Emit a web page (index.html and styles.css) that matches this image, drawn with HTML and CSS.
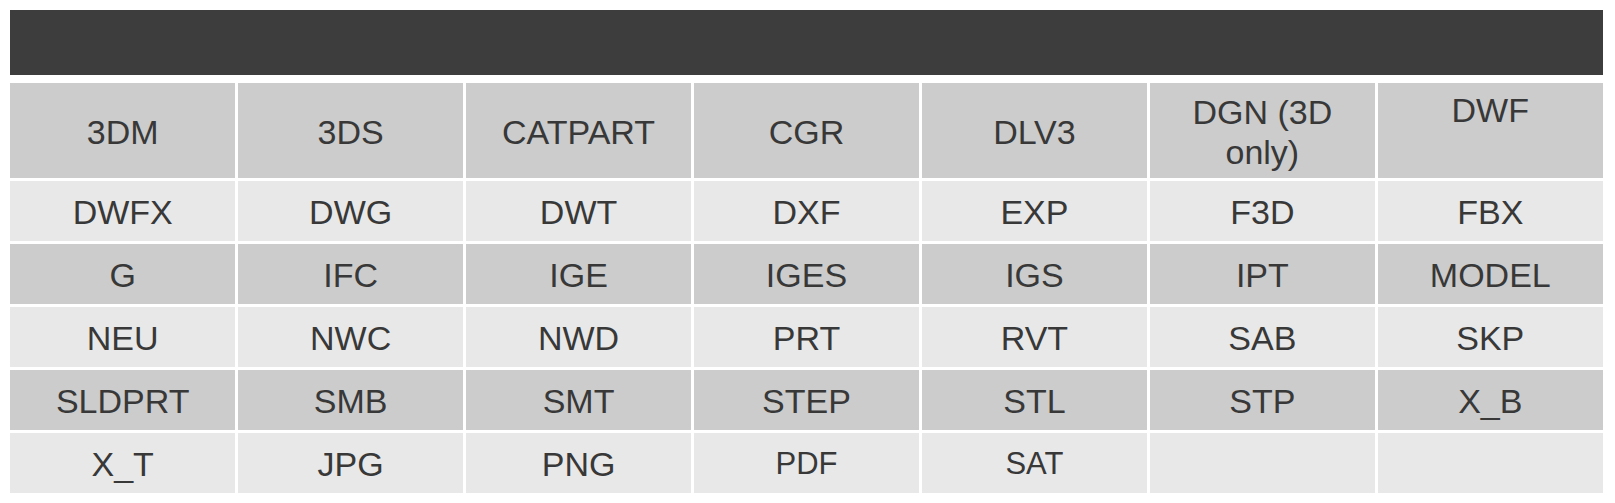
FILE: index.html
```html
<!DOCTYPE html>
<html>
<head>
<meta charset="utf-8">
<link rel="stylesheet" href="styles.css">
</head>
<body>
<div class="page">
  <div class="banner"></div>
  <div class="grid">
    <div class="cell dark tall">3DM</div>
    <div class="cell dark tall">3DS</div>
    <div class="cell dark tall">CATPART</div>
    <div class="cell dark tall">CGR</div>
    <div class="cell dark tall">DLV3</div>
    <div class="cell dark tall">DGN (3D<br>only)</div>
    <div class="cell dark tall top">DWF</div>

    <div class="cell light">DWFX</div>
    <div class="cell light">DWG</div>
    <div class="cell light">DWT</div>
    <div class="cell light">DXF</div>
    <div class="cell light">EXP</div>
    <div class="cell light">F3D</div>
    <div class="cell light">FBX</div>

    <div class="cell dark">G</div>
    <div class="cell dark">IFC</div>
    <div class="cell dark">IGE</div>
    <div class="cell dark">IGES</div>
    <div class="cell dark">IGS</div>
    <div class="cell dark">IPT</div>
    <div class="cell dark">MODEL</div>

    <div class="cell light">NEU</div>
    <div class="cell light">NWC</div>
    <div class="cell light">NWD</div>
    <div class="cell light">PRT</div>
    <div class="cell light">RVT</div>
    <div class="cell light">SAB</div>
    <div class="cell light">SKP</div>

    <div class="cell dark">SLDPRT</div>
    <div class="cell dark">SMB</div>
    <div class="cell dark">SMT</div>
    <div class="cell dark">STEP</div>
    <div class="cell dark">STL</div>
    <div class="cell dark">STP</div>
    <div class="cell dark">X_B</div>

    <div class="cell light">X_T</div>
    <div class="cell light">JPG</div>
    <div class="cell light">PNG</div>
    <div class="cell light small">PDF</div>
    <div class="cell light small">SAT</div>
    <div class="cell light"></div>
    <div class="cell light"></div>
  </div>
</div>
</body>
</html>
```

FILE: styles.css
```css
html, body {
  margin: 0;
  padding: 0;
  background: #ffffff;
}

.page {
  padding: 10px 12px 10px 10px;
  width: 1593px;
  font-family: "Liberation Sans", Arial, sans-serif;
}

.banner {
  height: 65px;
  background: #3d3d3d;
  margin-bottom: 8px;
}

.grid {
  display: grid;
  grid-template-columns: repeat(7, 1fr);
  grid-template-rows: 95px repeat(5, 60px);
  column-gap: 2.5px;
  row-gap: 3px;
}

.cell {
  display: flex;
  align-items: center;
  justify-content: center;
  text-align: center;
  font-size: 34px;
  line-height: 40px;
  padding-top: 2px;
  color: #383838;
}

.cell.top {
  align-items: flex-start;
  padding-top: 7px;
}

.cell.small {
  font-size: 31px;
}

.dark {
  background: #cccccc;
}

.light {
  background: #e8e8e8;
}
```
